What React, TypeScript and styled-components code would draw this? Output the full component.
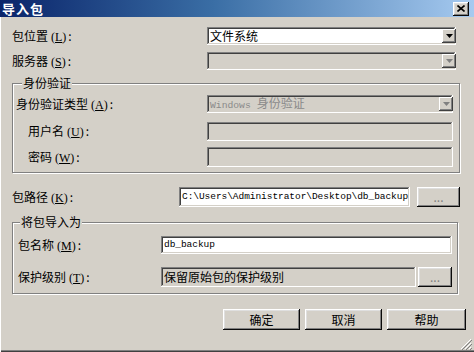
import React from 'react';
import styled, {createGlobalStyle} from 'styled-components';

const GlobalStyle = createGlobalStyle`
  html, body {
    margin: 0;
    padding: 0;
    background: #d4d0c8;
  }
  * {
    box-sizing: border-box;
  }
`

const Window = styled.div`
  width: 474px;
  height: 352px;
  background: #d4d0c8;
  display: flex;
  flex-direction: column;
  font-family: "Noto Sans CJK SC", "Noto Sans", sans-serif;
  font-size: 12px;
  line-height: 14px;
  color: #000;
  overflow: hidden;
  box-shadow: inset 1px 0 0 #fff, inset 0 -1px 0 #404040, inset 0 -2px 0 #808080;
`
const TitleBar = styled.div`
  height: 17px;
  flex: none;
  display: flex;
  align-items: center;
  justify-content: space-between;
  padding: 0 5px 0 2px;
  background: linear-gradient(90deg, #0a246a 0%, #3a6ea5 45%, #a6caf0 100%);
`
const TitleText = styled.span`
  color: #fff;
  font-weight: bold;
  font-size: 13px;
  letter-spacing: 1px;
`
const CloseButton = styled.div`
  width: 16px;
  height: 14px;
  background: #d4d0c8;
  display: flex;
  align-items: center;
  justify-content: center;
  box-shadow: inset -1px -1px #0a0a0a, inset 1px 1px #fff, inset -2px -2px #808080, inset 2px 2px #dfdfdf;
`
const Content = styled.div`
  display: flex;
  flex-direction: column;
  padding: 0 14px 0 12px;
`
const Row = styled.div<{ $h: number; $mt: number; $mr?: number }>`
  display: flex;
  align-items: center;
  height: ${p => p.$h}px;
  margin-top: ${p => p.$mt}px;
  margin-right: ${p => p.$mr || 0}px;
`
const Label = styled.div<{ $w: number; $indent?: number }>`
  flex: none;
  width: ${p => p.$w}px;
  padding-left: ${p => p.$indent || 0}px;
  white-space: nowrap;
`
const HotKeyWrap = styled.span`
  margin-left: 3px;
  margin-right: 2px;
  font-family: "Liberation Serif", serif;
  font-size: 12px;
`
const Field = styled.div<{ $disabled?: boolean; $mono?: boolean; $dark?: boolean; $w?: number }>`
  flex: ${p => (p.$w ? 'none' : '1')};
  width: ${p => (p.$w ? `${p.$w}px` : 'auto')};
  min-width: 0;
  height: 100%;
  display: flex;
  align-items: center;
  padding: 2px 2px 2px 3px;
  background: ${p => (p.$disabled ? '#d4d0c8' : '#fff')};
  color: ${p => (p.$disabled && !p.$dark ? '#8a8a8a' : '#000')};
  font-family: ${p => (p.$mono ? '"Liberation Mono", monospace' : 'inherit')};
  font-size: ${p => (p.$mono ? '9.5px' : '12px')};
  letter-spacing: ${p => (p.$mono ? '-0.05px' : 'normal')};
  white-space: nowrap;
  box-shadow: inset -1px -1px #fff, inset 1px 1px #808080, inset -2px -2px #d4d0c8, inset 2px 2px #404040;
`
const FieldText = styled.span`
  flex: 1;
`
const GrayMono = styled.span`
  font-family: "Liberation Mono", monospace;
  font-size: 9.7px;
  margin-right: 6px;
`
const ArrowButton = styled.div`
  flex: none;
  width: 14px;
  height: 100%;
  margin-right: -2px;
  display: flex;
  align-items: center;
  justify-content: center;
  background: #d4d0c8;
  box-shadow: inset -1px -1px #404040, inset 1px 1px #fff, inset -2px -2px #808080, inset 2px 2px #d4d0c8;
`
const Group = styled.div<{ $h: number; $mt: number; $mr?: number; $pl: number; $pr: number }>`
  display: flex;
  flex-direction: column;
  height: ${p => p.$h}px;
  margin-top: ${p => p.$mt}px;
  margin-right: ${p => p.$mr || 0}px;
  padding: 0 ${p => p.$pr}px 0 ${p => p.$pl}px;
  border: 1px solid #808080;
  box-shadow: inset 1px 1px 0 #fff, 1px 1px 0 #fff;
`
const GroupTitle = styled.div<{ $x: number }>`
  align-self: flex-start;
  margin: -8px 0 0 ${p => p.$x}px;
  padding: 0 1px;
  height: 14px;
  background: #d4d0c8;
`
const Button = styled.div<{ $w: number; $gray?: boolean }>`
  flex: none;
  width: ${p => p.$w}px;
  height: 100%;
  display: flex;
  align-items: center;
  justify-content: center;
  color: ${p => (p.$gray ? '#808080' : '#000')};
  background: #d4d0c8;
  box-shadow: inset -1px -1px #0a0a0a, inset 1px 1px #fff, inset -2px -2px #808080, inset 2px 2px #dfdfdf;
`
const Gap = styled.div<{ $w: number }>`
  flex: none;
  width: ${p => p.$w}px;
`
const ButtonBar = styled.div`
  display: flex;
  justify-content: flex-end;
  gap: 5px;
  height: 21px;
  margin: 15px 8px 0 0;
`
const GripRow = styled.div`
  flex: 1;
  display: flex;
  justify-content: flex-end;
  align-items: flex-end;
  padding: 0 2px 2px 0;
`

const HotKey: React.FC<{ k: string }> = ({k}) => (
  <HotKeyWrap>(<u>{k}</u>)</HotKeyWrap>
)

const Arrow: React.FC<{ disabled?: boolean }> = ({disabled}) => (
  <ArrowButton>
    <svg width="7" height="4" viewBox="0 0 7 4">
      <polygon points="0,0 7,0 3.5,4" fill={disabled ? '#808080' : '#000'}/>
    </svg>
  </ArrowButton>
)

export default function App() {
  return (
    <Window>
      <GlobalStyle/>
      <TitleBar>
        <TitleText>导入包</TitleText>
        <CloseButton>
          <svg width="8" height="7" viewBox="0 0 8 7">
            <path d="M0.5 0.5 L7.5 6.5 M7.5 0.5 L0.5 6.5" stroke="#000" strokeWidth="1.6"/>
          </svg>
        </CloseButton>
      </TitleBar>
      <Content>
        <Row $h={18} $mt={10} $mr={4}>
          <Label $w={195}>包位置<HotKey k="L"/>:</Label>
          <Field>
            <FieldText>文件系统</FieldText>
            <Arrow/>
          </Field>
        </Row>
        <Row $h={18} $mt={7} $mr={4}>
          <Label $w={195}>服务器<HotKey k="S"/>:</Label>
          <Field $disabled>
            <FieldText/>
            <Arrow disabled/>
          </Field>
        </Row>

        <Group $h={90} $mt={13} $pl={3} $pr={6}>
          <GroupTitle $x={6}>身份验证</GroupTitle>
          <Row $h={18} $mt={5}>
            <Label $w={191}>身份验证类型<HotKey k="A"/>:</Label>
            <Field $disabled>
              <FieldText><GrayMono>Windows</GrayMono>身份验证</FieldText>
              <Arrow disabled/>
            </Field>
          </Row>
          <Row $h={19} $mt={9}>
            <Label $w={191} $indent={12}>用户名<HotKey k="U"/>:</Label>
            <Field $disabled/>
          </Row>
          <Row $h={20} $mt={6}>
            <Label $w={191} $indent={12}>密码<HotKey k="W"/>:</Label>
            <Field $disabled/>
          </Row>
        </Group>

        <Row $h={20} $mt={14}>
          <Label $w={167}>包路径<HotKey k="K"/>:</Label>
          <Field $mono>C:\Users\Administrator\Desktop\db_backup</Field>
          <Gap $w={7}/>
          <Button $w={43} $gray>...</Button>
        </Row>

        <Group $h={72} $mt={15} $mr={2} $pl={5} $pr={5}>
          <GroupTitle $x={2}>将包导入为</GroupTitle>
          <Row $h={18} $mt={7}>
            <Label $w={143}>包名称<HotKey k="M"/>:</Label>
            <Field $mono>db_backup</Field>
          </Row>
          <Row $h={20} $mt={13}>
            <Label $w={143}>保护级别<HotKey k="T"/>:</Label>
            <Field $disabled $dark>保留原始包的保护级别</Field>
            <Gap $w={2}/>
            <Button $w={34} $gray>...</Button>
          </Row>
        </Group>
      </Content>
      <ButtonBar>
        <Button $w={77}>确定</Button>
        <Button $w={77}>取消</Button>
        <Button $w={79}>帮助</Button>
      </ButtonBar>
      <GripRow>
        <svg width="12" height="12" viewBox="0 0 12 12">
          <path d="M11 1 L1 11 M11 5 L5 11 M11 9 L9 11" stroke="#fff" strokeWidth="1"/>
          <path d="M12 2 L2 12 M12 6 L6 12 M12 10 L10 12" stroke="#808080" strokeWidth="1"/>
        </svg>
      </GripRow>
    </Window>
  );
}
